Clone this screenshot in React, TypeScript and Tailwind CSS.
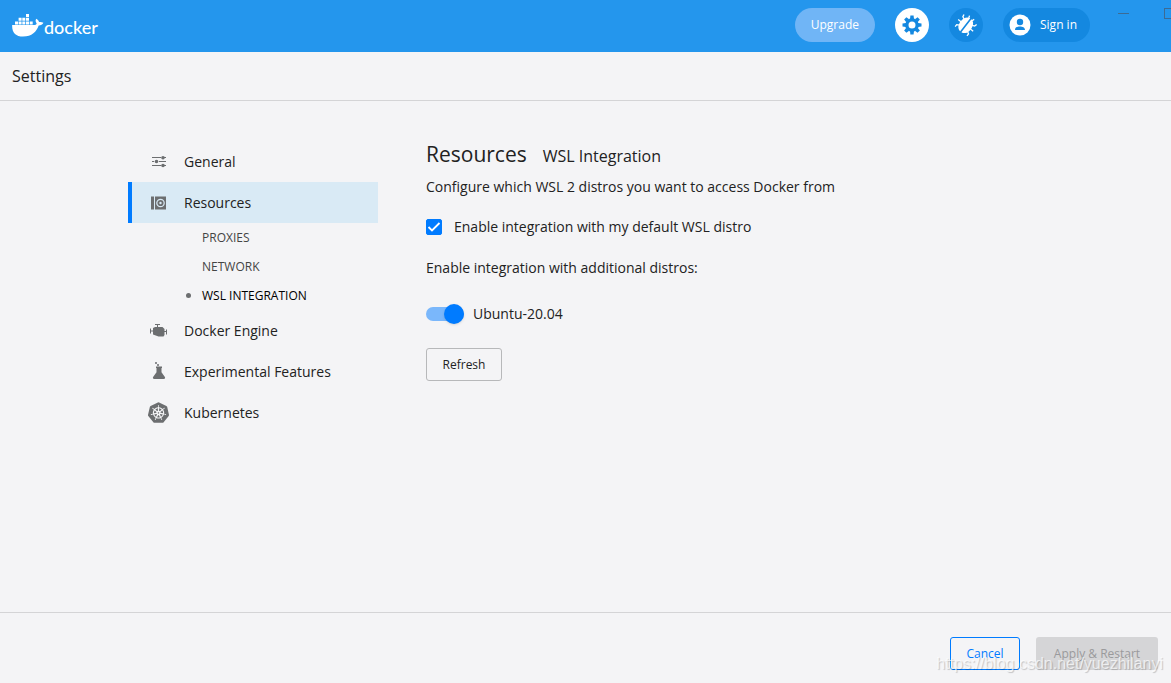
import { useState } from "react";
import type { ReactNode } from "react";
import { SiKubernetes } from "react-icons/si";

const DockerWhale = () => (
  <svg viewBox="0 0 32 24" className="h-6 w-8" fill="currentColor" aria-hidden="true">
    <path d="M14 0h3v3h-3z" />
    <path d="M6.600 3.700h3v3h-3zM10.300 3.700h3v3h-3zM14 3.700h3v3h-3z" />
    <path d="M3 7.400h3v3H3zM6.600 7.400h3v3h-3zM10.300 7.400h3v3h-3zM14 7.400h3v3h-3zM17.700 7.400h3v3h-3z" />
    <path d="M.2 11h21.500c1.700 0 2.600-.5 3-1.500-1.400-1.600-1.400-3.400-.4-4.800 1.600.9 2.500 2 2.800 3.400 1.500-.3 2.800-.1 4.300.6-.9 1.800-2.500 2.700-4.700 2.700C24.500 17.500 20 22.500 11 22.500 3.800 22.500-.3 18.500.2 11z" />
  </svg>
);

const GearIcon = () => (
  <svg viewBox="0 0 20 20" className="size-5" fill="currentColor" aria-hidden="true">
    <path
      fillRule="evenodd"
      d="M10 3.200a6.800 6.800 0 1 0 0 13.600 6.800 6.800 0 0 0 0-13.600zm0 3.300a3.500 3.500 0 1 1 0 7 3.500 3.500 0 0 1 0-7z"
    />
    {[0, 45, 90, 135, 180, 225, 270, 315].map((angle) => (
      <path key={angle} d="M8.400.5h3.200l.4 3.500H8z" transform={`rotate(${angle} 10 10)`} />
    ))}
  </svg>
);

const BugIcon = () => (
  <svg viewBox="0 0 24 24" className="size-6" aria-hidden="true">
    <g transform="rotate(38 12 12)">
      <g fill="none" stroke="currentColor" strokeWidth="1.300">
        <path d="M7 8.500 4.500 7.500 4 5M6 12.500H2.500M7 16l-2.500 1.500V20M17 8.500l2.500-1 .5-2.500M18 12.500h3.500M17 16l2.500 1.500V20M10 5 9 2.500M14 5l1-2.500" />
      </g>
      <path
        fill="currentColor"
        d="M11.200 4.200v16.300C7.700 20 5.500 17 5.500 12.500s2.200-7.800 5.700-8.300zM12.800 4.200v16.300c3.500-.5 5.700-3.500 5.700-8s-2.200-7.800-5.700-8.300z"
      />
    </g>
  </svg>
);

const AccountIcon = () => (
  <svg viewBox="0 0 22 22" className="size-[22px]" aria-hidden="true">
    <circle cx="11" cy="11" r="10.500" fill="currentColor" />
    <circle cx="11" cy="8" r="3.200" fill="#1488e0" />
    <path d="M6 16c0-2.700 2.500-3.600 5-3.600s5 .9 5 3.600z" fill="#1488e0" />
  </svg>
);

const SlidersIcon = () => (
  <svg viewBox="0 0 14 12" className="h-3 w-3.5" aria-hidden="true">
    <path d="M0 1.500h9M0 5.500h2M7 5.500h7M0 9.500h9M12 1.500h2M12 9.500h2" stroke="currentColor" strokeWidth="1" />
    <g fill="currentColor">
      <circle cx="11" cy="1.800" r="1.800" />
      <circle cx="4.500" cy="5.500" r="1.800" />
      <circle cx="11" cy="9.500" r="1.800" />
    </g>
  </svg>
);

const DriveIcon = () => (
  <svg viewBox="0 0 15 14" className="h-3.5 w-[15px]" aria-hidden="true">
    <path d="M0 .5h3v13H0zM4 .5h11v13H4z" fill="currentColor" />
    <circle cx="9.500" cy="7" r="3.700" fill="none" stroke="#d9eaf5" strokeWidth="1.200" />
    <circle cx="9.500" cy="7" r="1.200" fill="#d9eaf5" />
  </svg>
);

const EngineIcon = () => (
  <svg viewBox="0 0 17 14" className="h-3.5 w-[17px]" aria-hidden="true">
    <path d="M3 4 5 3h7.500L14.500 5v6l-1 1.500h-5L3 10.500z" fill="currentColor" />
    <path d="M5 .5h5M7.500.5v3M.5 4.500v5M.5 7H3M14 7.500h2M16.500 5.500v5" stroke="currentColor" fill="none" />
  </svg>
);

const FlaskIcon = () => (
  <svg viewBox="0 0 14 20" className="h-5 w-3.5" fill="currentColor" aria-hidden="true">
    <circle cx="4" cy="1" r="1" />
    <circle cx="6" cy="3" r="1" />
    <path d="M4 4.500h6V6H9.500v4.200l3.400 4.800c.6 1-.1 2-1.200 2H2.300c-1.100 0-1.800-1-1.200-2l3.400-4.800V6H4z" />
  </svg>
);

interface NavItem {
  label: string;
  icon: ReactNode;
  children?: string[];
}

const navItems: NavItem[] = [
  { label: "General", icon: <SlidersIcon /> },
  {
    label: "Resources",
    icon: <DriveIcon />,
    children: ["PROXIES", "NETWORK", "WSL INTEGRATION"],
  },
  { label: "Docker Engine", icon: <EngineIcon /> },
  { label: "Experimental Features", icon: <FlaskIcon /> },
  { label: "Kubernetes", icon: <SiKubernetes className="size-[21px]" /> },
];

function Header() {
  return (
    <header className="flex h-[52px] shrink-0 items-start justify-between bg-[#2496ed] pl-3 text-white">
      <a href="#" aria-label="docker" className="flex items-center pt-[13px]">
        <DockerWhale />
        <span className="pt-0.5 font-[Lato,sans-serif] text-lg leading-6 font-medium">docker</span>
      </a>
      <div className="flex items-start gap-5 pt-2 text-xs font-medium">
        <button className="h-[34px] rounded-full bg-[#70b5f6] px-4">Upgrade</button>
        <button
          aria-label="Settings"
          className="flex size-[34px] items-center justify-center rounded-full bg-white text-[#1488e0]"
        >
          <GearIcon />
        </button>
        <button aria-label="Troubleshoot" className="flex size-[34px] items-center justify-center rounded-full bg-[#1488e0]">
          <BugIcon />
        </button>
        <button className="flex h-[34px] items-center gap-[9px] rounded-full bg-[#1488e0] pr-[13px] pl-1.5">
          <AccountIcon />
          Sign in
        </button>
        <div className="ml-2 flex items-start gap-[35px] overflow-hidden text-[#3c6b94]">
          <button aria-label="Minimize" className="flex h-2.5 w-[11px] items-center">
            <span className="h-px w-full bg-current" />
          </button>
          <button aria-label="Maximize" className="w-[7px]">
            <span className="block h-[11px] w-[11px] border border-current" />
          </button>
        </div>
      </div>
    </header>
  );
}

function Sidebar() {
  return (
    <nav className="w-[250px] shrink-0">
      <ul>
        {navItems.map((item) => (
          <li key={item.label}>
            <a
              href="#"
              className={
                item.children
                  ? "flex h-[41px] items-center gap-[15px] border-l-4 border-[#007bff] bg-[#d9eaf5] pl-4"
                  : "flex h-[41px] items-center gap-[15px] border-l-4 border-transparent pl-4"
              }
            >
              <span className="flex w-[21px] justify-center text-[#6c6e70]">{item.icon}</span>
              {item.label}
            </a>
            {item.children && (
              <ul className="text-xs">
                {item.children.map((child) => (
                  <li key={child}>
                    <a
                      href="#"
                      className={
                        child === "WSL INTEGRATION"
                          ? "flex h-[29px] items-center pl-[58px] text-black"
                          : "flex h-[29px] items-center pl-[74px] text-[#444]"
                      }
                    >
                      {child === "WSL INTEGRATION" && <span className="mr-[11px] size-[5px] rounded-full bg-[#6c6e70]" />}
                      {child}
                    </a>
                  </li>
                ))}
              </ul>
            )}
          </li>
        ))}
      </ul>
    </nav>
  );
}

function WslIntegration() {
  const [useDefault, setUseDefault] = useState(true);
  const [ubuntu, setUbuntu] = useState(true);

  return (
    <section className="flex flex-1 flex-col items-start">
      <div className="flex items-baseline gap-4">
        <h2 className="text-[21px] leading-[26px]">Resources</h2>
        <h3 className="text-base">WSL Integration</h3>
      </div>
      <p className="mt-[9px]">Configure which WSL 2 distros you want to access Docker from</p>
      <label className="mt-5 flex items-center gap-3">
        <span className="relative flex size-4">
          <input
            type="checkbox"
            checked={useDefault}
            onChange={(e) => setUseDefault(e.target.checked)}
            className="peer size-4 appearance-none rounded-xs border border-[#007bff] checked:bg-[#007bff]"
          />
          <svg
            viewBox="0 0 16 16"
            className="pointer-events-none absolute inset-0 hidden size-4 peer-checked:block"
            aria-hidden="true"
          >
            <path d="M2.500 8l3.500 3.500L13.500 4" fill="none" stroke="#fff" strokeWidth="1.800" />
          </svg>
        </span>
        Enable integration with my default WSL distro
      </label>
      <p className="mt-[21px]">Enable integration with additional distros:</p>
      <label className="mt-[26px] flex items-center gap-[9px]">
        <span className="relative flex h-5 w-[38px] items-center">
          <input
            type="checkbox"
            role="switch"
            checked={ubuntu}
            onChange={(e) => setUbuntu(e.target.checked)}
            className="peer h-3.5 w-full appearance-none rounded-full bg-gray-400 checked:bg-[#7ab7fb]"
          />
          <span className="pointer-events-none absolute left-0 size-5 rounded-full bg-white shadow-sm peer-checked:left-[18px] peer-checked:bg-[#007bff]" />
        </span>
        Ubuntu-20.04
      </label>
      <button className="mt-6 h-[33px] min-w-[76px] rounded-[3px] border border-[#b7b8ba] px-[15px] text-xs font-medium">
        Refresh
      </button>
    </section>
  );
}

export default function App() {
  return (
    <div className="relative flex min-h-screen flex-col overflow-hidden bg-[#f4f4f6] font-['Open_Sans',sans-serif] text-sm text-[#222]">
      <Header />
      <div className="flex h-[49px] shrink-0 items-center border-b border-[#d4d4d6] pl-3">
        <h1 className="text-base font-medium">Settings</h1>
      </div>
      <main className="flex flex-1 gap-12 px-32 pt-10">
        <Sidebar />
        <WslIntegration />
      </main>
      <footer className="flex h-[71px] shrink-0 items-start justify-end gap-4 border-t border-[#d4d4d6] pt-6 pr-[13px] text-xs font-medium">
        <button className="h-[33px] min-w-[70px] rounded-[3px] border border-[#007bff] px-[15px] text-[#007bff]">Cancel</button>
        <button disabled className="h-[33px] min-w-[122px] rounded-[3px] bg-[#d5d5d7] px-4 text-[#9a9a9c]">
          Apply &amp; Restart
        </button>
      </footer>
      <div className="pointer-events-none absolute right-2 bottom-[7px] font-['Liberation_Sans',sans-serif] text-base text-white/70 [text-shadow:1px_1px_1px_rgb(0_0_0/0.2)]">
        https://blog.csdn.net/yuezhilanyi
      </div>
    </div>
  );
}
